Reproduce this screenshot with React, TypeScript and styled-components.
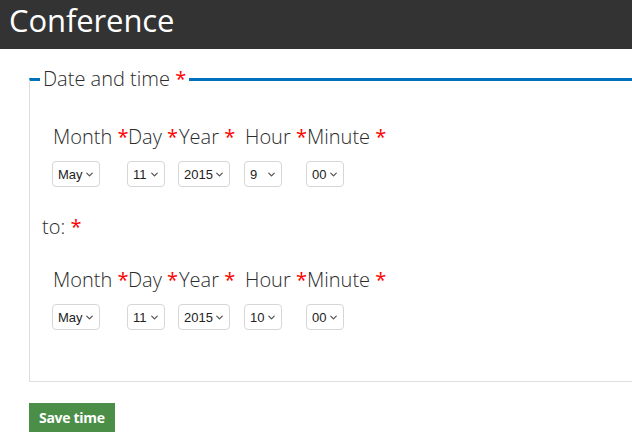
import React from "react";
import styled, { createGlobalStyle } from "styled-components";
import { ChevronDown } from "lucide-react";

const GlobalStyle = createGlobalStyle`
  html, body {
    margin: 0;
    padding: 0;
    background: #fff;
    overflow: hidden;
    font-family: "Open Sans", "Liberation Sans", sans-serif;
    color: #2b2b2b;
  }
`;

type Field = { label: string; value: string; options: string[]; col: number; box: number };

const months = ["Jan", "Feb", "Mar", "Apr", "May", "Jun", "Jul", "Aug", "Sep", "Oct", "Nov", "Dec"];
const days = Array.from({ length: 31 }, (_, i) => String(i + 1));
const years = ["2014", "2015", "2016"];
const hours = Array.from({ length: 24 }, (_, i) => String(i));
const minutes = ["00", "15", "30", "45"];

function fields(hour: string): Field[] {
  return [
    { label: "Month", value: "May", options: months, col: 75, box: 48 },
    { label: "Day", value: "11", options: days, col: 51, box: 38 },
    { label: "Year", value: "2015", options: years, col: 66, box: 52 },
    { label: "Hour", value: hour, options: hours, col: 62, box: 38 },
    { label: "Minute", value: "00", options: minutes, col: 90, box: 38 },
  ];
}

function DateTimeRow({ hour }: { hour: string }) {
  return (
    <FieldRow>
      {fields(hour).map((f) => (
        <Column key={f.label} $width={f.col}>
          <Label>
            {f.label} <Required>*</Required>
          </Label>
          <SelectBox $width={f.box}>
            <NativeSelect defaultValue={f.value}>
              {f.options.map((o) => (
                <option key={o}>{o}</option>
              ))}
            </NativeSelect>
            <ChevronDown size={11} strokeWidth={2.8} color="#555" />
          </SelectBox>
        </Column>
      ))}
    </FieldRow>
  );
}

export default function App() {
  return (
    <>
      <GlobalStyle />
      <Header>Conference</Header>
      <Form>
        <Fieldset>
          <Legend>
            Date and time <Required>*</Required>
          </Legend>
          <DateTimeRow hour="9" />
          <ToLabel>
            to: <Required>*</Required>
          </ToLabel>
          <DateTimeRow hour="10" />
        </Fieldset>
        <SaveButton type="button">Save time</SaveButton>
      </Form>
    </>
  );
}

const Header = styled.h1`
  margin: 0;
  height: 49px;
  background: #333333;
  color: #fff;
  font-weight: 400;
  font-size: 31px;
  line-height: 40px;
  padding: 0 9px;
  letter-spacing: -0.1px;
`;

const Form = styled.form`
  padding: 16px 0 0 29px;
`;

const Fieldset = styled.fieldset`
  margin: 0;
  width: 640px;
  box-sizing: border-box;
  border: none;
  border-top: 3px solid #0071bb;
  border-left: 1px solid #dddddd;
  border-bottom: 1px solid #dddddd;
  padding: 30px 0 51px 10px;
`;

const Legend = styled.legend`
  padding: 0 3px;
  font-size: 20px;
  font-weight: 300;
  line-height: 28px;
`;

const Required = styled.span`
  color: #ff0000;
  font-weight: 400;
`;

const FieldRow = styled.div`
  display: flex;
  margin-left: 12px;
`;

const Column = styled.div<{ $width: number }>`
  width: ${(p) => p.$width}px;
  flex: none;
  display: flex;
  flex-direction: column;
  align-items: flex-start;
  gap: 10px;
`;

const Label = styled.label`
  font-size: 20px;
  font-weight: 300;
  line-height: 28px;
  white-space: nowrap;
  padding-left: 1px;
`;

const SelectBox = styled.div<{ $width: number }>`
  width: ${(p) => p.$width}px;
  height: 26px;
  box-sizing: border-box;
  display: flex;
  align-items: center;
  padding: 0 4px 0 5px;
  border: 1px solid #d6d6d6;
  border-radius: 4px;
  background: #fff;
`;

const NativeSelect = styled.select`
  appearance: none;
  border: none;
  background: transparent;
  padding: 0;
  margin: 0;
  flex: 1;
  min-width: 0;
  width: 0;
  font-family: "Liberation Sans", Arial, sans-serif;
  font-size: 13px;
  color: #222;
  outline: none;
  text-overflow: clip;
`;

const ToLabel = styled.div`
  font-size: 20px;
  font-weight: 300;
  line-height: 28px;
  margin: 26px 0 25px 2px;
`;

const SaveButton = styled.button`
  margin-top: 21px;
  height: 29px;
  padding: 0 10px;
  border: none;
  border-radius: 0;
  background: #4b8e47;
  color: #fff;
  font-family: "Open Sans", "Liberation Sans", sans-serif;
  font-weight: 700;
  font-size: 14px;
  letter-spacing: -0.3px;
`;
